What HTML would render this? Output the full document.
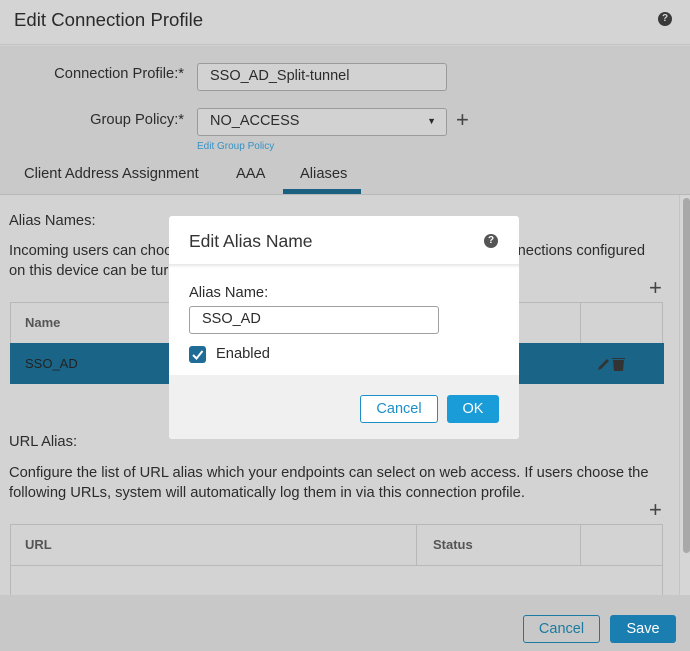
<!DOCTYPE html>
<html><head><style>
*{box-sizing:border-box;margin:0;padding:0}
body{width:690px;height:651px;overflow:hidden;position:relative;font-family:"Liberation Sans",sans-serif;color:#2c2c2c;background:#d3d3d3}
.a{position:absolute;white-space:nowrap}
.inp{position:absolute;border:1px solid #9a9a9a;border-radius:3px;font-size:14.5px;padding-left:12px;line-height:25px}
.btn{position:absolute;border-radius:3px;font-size:14.5px;text-align:center}
.t{font-size:14.7px}
</style></head><body>
<div class="a" style="left:0;top:0;width:690px;height:45px;background:#d4d4d4;border-bottom:1px solid #c2c2c2"></div>
<div class="a" style="left:14px;top:9px;font-size:18.6px;color:#2a2a2a">Edit Connection Profile</div>
<div class="a" style="left:658px;top:12px;width:14px;height:14px;border-radius:50%;background:#3a3a3a;color:#d4d4d4;font-size:10px;font-weight:bold;text-align:center;line-height:14px">?</div>
<div class="a" style="left:0;top:46px;width:690px;height:148px;background:#c9c9c9"></div>
<div class="a t" style="left:0;top:66px;width:184px;text-align:right">Connection Profile:*</div>
<div class="inp" style="left:197px;top:63px;width:250px;height:28px;background:#d2d2d2">SSO_AD_Split-tunnel</div>
<div class="a t" style="left:0;top:112px;width:184px;text-align:right">Group Policy:*</div>
<div class="inp" style="left:197px;top:108px;width:250px;height:28px;background:#d2d2d2">NO_ACCESS<span style="position:absolute;right:10px;top:0;font-size:9px">▼</span></div>
<div class="a" style="left:456px;top:108px;font-size:22px;color:#444;line-height:24px">+</div>
<div class="a" style="left:197px;top:141px;font-size:10px;color:#3592c4">Edit Group Policy</div>
<div class="a t" style="left:24px;top:166px">Client Address Assignment</div>
<div class="a t" style="left:236px;top:166px">AAA</div>
<div class="a t" style="left:300px;top:166px">Aliases</div>
<div class="a" style="left:283px;top:189px;width:78px;height:5px;background:#1b6080"></div>
<div class="a" style="left:0;top:194px;width:690px;height:1px;background:#b8b8b8"></div>
<div class="a" style="left:679px;top:195px;width:11px;height:400px;background:#d6d6d6;border-left:1px solid #c4c4c4"></div>
<div class="a" style="left:683px;top:198px;width:7px;height:355px;background:#a8a8a8;border-radius:4px"></div>
<div class="a t" style="left:9px;top:213px">Alias Names:</div>
<div class="a t" style="left:9px;top:241px;line-height:20px">Incoming users can choose an alias name upon first login. Aliases from all connections configured<br>on this device can be turned on or off for display.</div>
<div class="a" style="left:649px;top:276px;font-size:22px;color:#444;line-height:24px">+</div>
<div class="a" style="left:10px;top:302px;width:653px;height:82px;border:1px solid #b8b8b8"></div>
<div class="a" style="left:580px;top:302px;width:1px;height:41px;background:#b8b8b8"></div>
<div class="a" style="left:25px;top:315px;font-size:13px;font-weight:bold;color:#555">Name</div>
<div class="a" style="left:10px;top:343px;width:654px;height:41px;background:#1a6587"></div>
<div class="a" style="left:25px;top:356px;font-size:13px;color:#222">SSO_AD</div>
<svg class="a" style="left:597px;top:355px" width="32" height="18"><path d="M1 15 L2 12 L10 4 L12 6 L4 14 Z" fill="#333"/><path d="M15 3h13v1H15z M16 5h11l-1 11h-9z" fill="#333"/></svg>
<div class="a t" style="left:9px;top:434px">URL Alias:</div>
<div class="a t" style="left:9px;top:463px;line-height:20px">Configure the list of URL alias which your endpoints can select on web access. If users choose the<br>following URLs, system will automatically log them in via this connection profile.</div>
<div class="a" style="left:649px;top:498px;font-size:22px;color:#444;line-height:24px">+</div>
<div class="a" style="left:10px;top:524px;width:653px;height:80px;border:1px solid #b8b8b8"></div>
<div class="a" style="left:10px;top:565px;width:653px;height:1px;background:#b8b8b8"></div>
<div class="a" style="left:416px;top:524px;width:1px;height:41px;background:#b8b8b8"></div>
<div class="a" style="left:580px;top:524px;width:1px;height:41px;background:#b8b8b8"></div>
<div class="a" style="left:25px;top:537px;font-size:13px;font-weight:bold;color:#555">URL</div>
<div class="a" style="left:433px;top:537px;font-size:13px;font-weight:bold;color:#555">Status</div>
<div class="a" style="left:0;top:595px;width:690px;height:56px;background:#c8c8c8"></div>
<div class="btn" style="left:523px;top:615px;width:77px;height:28px;border:1px solid #1b7aa0;color:#1b7aa0;line-height:26px">Cancel</div>
<div class="btn" style="left:610px;top:615px;width:66px;height:28px;background:#1b7eb0;color:#fff;line-height:28px">Save</div>
<div class="a" style="left:169px;top:216px;width:350px;height:223px;background:#fff;border-radius:3px;overflow:hidden">
 <div class="a" style="left:20px;top:15px;font-size:17.5px;color:#333">Edit Alias Name</div>
 <div class="a" style="left:315px;top:18px;width:14px;height:14px;border-radius:50%;background:#555;color:#fff;font-size:10px;font-weight:bold;text-align:center;line-height:14px">?</div>
 <div class="a" style="left:0;top:48px;width:350px;height:4px;background:linear-gradient(#e6e6e6,#fff)"></div>
 <div class="a t" style="left:20px;top:69px">Alias Name:</div>
 <div class="inp" style="left:20px;top:90px;width:250px;height:28px;background:#fff;border-color:#a0a0a0">SSO_AD</div>
 <div class="a" style="left:20px;top:130px;width:17px;height:17px;background:#1f6d96;border-radius:3px"><svg width="17" height="17"><path d="M4 9 L7.5 12.5 L13.5 5" stroke="#fff" stroke-width="2" fill="none"/></svg></div>
 <div class="a t" style="left:47px;top:130px">Enabled</div>
 <div class="a" style="left:0;top:159px;width:350px;height:64px;background:#f0f0f0"></div>
 <div class="btn" style="left:191px;top:179px;width:78px;height:28px;border:1px solid #1c8fc6;color:#1c8fc6;background:#fff;line-height:26px">Cancel</div>
 <div class="btn" style="left:278px;top:179px;width:52px;height:28px;background:#1a9cd8;color:#fff;line-height:28px">OK</div>
</div>
</body></html>
